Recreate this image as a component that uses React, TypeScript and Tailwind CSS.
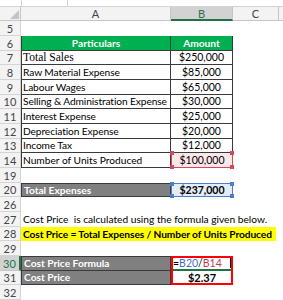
import React from 'react';

const ROW_H = [15, 15, 14, 15, 15, 14, 15, 15, 14, 15, 15, 14, 15, 15, 14, 15, 15, 14, 15];

const dataRows = [
  { n: 7, a: 'Total Sales', b: '$250,000', serif: true },
  { n: 8, a: 'Raw Material Expense', b: '$85,000' },
  { n: 9, a: 'Labour Wages', b: '$65,000' },
  { n: 10, a: 'Selling & Administration Expense', b: '$30,000' },
  { n: 11, a: 'Interest Expense', b: '$25,000' },
  { n: 12, a: 'Depreciation Expense', b: '$20,000' },
  { n: 13, a: 'Income Tax', b: '$12,000' },
];

function RowHead({ n, h, active }: { n: number; h: number; active?: boolean }) {
  return (
    <div
      style={{ height: h }}
      className={`flex w-[21px] shrink-0 items-center justify-center border-b border-r text-[11px] ${
        active ? 'border-r-2 border-b-[#c6c6c6] border-r-[#217346] bg-[#d2d2d2] text-[#217346]' : 'border-[#d4d4d4] bg-[#f3f3f3] text-[#444]'
      }`}
    >
      {n}
    </div>
  );
}

function Handles({ color }: { color: string }) {
  const c = `absolute h-[4px] w-[4px] ${color}`;
  return (
    <>
      <span className={`${c} -left-[2px] -top-[2px]`} />
      <span className={`${c} -right-[2px] -top-[2px]`} />
      <span className={`${c} -left-[2px] -bottom-[2px]`} />
      <span className={`${c} -right-[2px] -bottom-[2px]`} />
    </>
  );
}

export default function App() {
  let i = 0;
  const h = () => ROW_H[i++];

  return (
    <div className="h-[300px] w-[283px] overflow-hidden bg-white font-['Lato',sans-serif] text-[10.2px] leading-none text-black">
      {/* formula bar remnant */}
      <div className="flex h-[7px] border-b border-[#d4d4d4]">
        <div className="w-[22px] border-r border-[#d4d4d4]" />
        <div className="w-[46px] border-r border-[#d4d4d4]" />
        <div className="flex-1" />
      </div>

      {/* column headers */}
      <div className="flex h-[14px] text-[11px] text-[#444]">
        <div className="relative w-[21px] shrink-0 border-b border-r border-[#c6c6c6] bg-[#f3f3f3]">
          <svg className="absolute bottom-[1px] right-[1px]" width="9" height="9" viewBox="0 0 9 9">
            <path d="M9 0 L9 9 L0 9 Z" fill="#c4c4c4" />
          </svg>
        </div>
        <div className="flex w-[150px] items-center justify-center border-b border-r border-[#c6c6c6] bg-[#f3f3f3]">A</div>
        <div className="flex w-[62px] items-center justify-center border-b-2 border-r border-b-[#217346] border-r-[#c6c6c6] bg-[#d2d2d2] text-[#217346]">B</div>
        <div className="flex w-[46px] items-center justify-center border-b border-r border-[#c6c6c6] bg-[#f3f3f3]">C</div>
        <div className="flex-1 border-b border-[#c6c6c6] bg-[#f3f3f3]" />
      </div>

      {/* row 5 */}
      {(() => {
        const hh = h();
        return (
          <div className="flex" style={{ height: hh }}>
            <RowHead n={5} h={hh} />
          </div>
        );
      })()}

      {/* row 6 header */}
      {(() => {
        const hh = h();
        return (
          <div className="flex" style={{ height: hh }}>
            <RowHead n={6} h={hh} />
            <div className="flex w-[150px] items-center justify-center border-x border-b border-[#3a3a3a] bg-[#00b050] font-bold text-white">
              Particulars
            </div>
            <div className="flex w-[62px] items-center justify-center border-b border-r border-[#3a3a3a] bg-[#00b050] font-bold text-white">
              Amount
            </div>
          </div>
        );
      })()}

      {dataRows.map((r) => {
        const hh = h();
        return (
          <div key={r.n} className="flex" style={{ height: hh }}>
            <RowHead n={r.n} h={hh} />
            <div
              className={`flex w-[150px] items-center whitespace-nowrap border-x border-b border-[#3a3a3a] pl-[1px] ${
                r.serif ? "font-['Liberation_Serif',serif] text-[11.5px]" : 'tracking-[-0.1px]'
              }`}
            >
              {r.a}
            </div>
            <div className="flex w-[62px] items-center justify-center text-[10.5px] border-b border-r border-[#3a3a3a]">{r.b}</div>
          </div>
        );
      })}

      {/* row 14 */}
      {(() => {
        const hh = h();
        return (
          <div className="flex" style={{ height: hh }}>
            <RowHead n={14} h={hh} />
            <div className="flex w-[150px] items-center whitespace-nowrap border-x border-b border-[#3a3a3a] pl-[1px]">
              Number of Units Produced
            </div>
            <div className="relative flex w-[62px] items-center justify-center border border-t-0 border-[#d2495c] bg-[#fbe6e9] text-[10.5px]">
              $100,000
              <Handles color="bg-[#d2495c]" />
            </div>
          </div>
        );
      })()}

      {/* row 19 */}
      {(() => {
        const hh = h();
        return (
          <div className="flex" style={{ height: hh }}>
            <RowHead n={19} h={hh} />
          </div>
        );
      })()}

      {/* row 20 */}
      {(() => {
        const hh = h();
        return (
          <div className="flex" style={{ height: hh }}>
            <RowHead n={20} h={hh} />
            <div className="flex w-[150px] items-center border border-[#3a3a3a] bg-[#808080] pl-[2px] font-bold text-white">
              Total Expenses
            </div>
            <div className="relative flex w-[62px] items-center justify-center border border-[#4a7fcf] bg-[#e3ecf8] text-[10.5px] font-bold">
              $237,000
              <Handles color="bg-[#4a7fcf]" />
            </div>
          </div>
        );
      })()}

      {/* row 26 */}
      {(() => {
        const hh = h();
        return (
          <div className="flex" style={{ height: hh }}>
            <RowHead n={26} h={hh} />
          </div>
        );
      })()}

      {/* row 27 */}
      {(() => {
        const hh = h();
        return (
          <div className="flex" style={{ height: hh }}>
            <RowHead n={27} h={hh} />
            <div className="flex items-center whitespace-nowrap pl-[2px]">
              Cost Price&nbsp; is calculated using the formula given below.
            </div>
          </div>
        );
      })()}

      {/* row 28 */}
      {(() => {
        const hh = h();
        return (
          <div className="flex" style={{ height: hh }}>
            <RowHead n={28} h={hh} />
            <div className="flex w-[255px] items-center whitespace-nowrap bg-[#ffff00] pl-[2px] font-bold tracking-[-0.1px]">
              Cost Price = Total Expenses / Number of Units Produced
            </div>
          </div>
        );
      })()}

      {/* row 29 */}
      {(() => {
        const hh = h();
        return (
          <div className="flex" style={{ height: hh }}>
            <RowHead n={29} h={hh} />
          </div>
        );
      })()}

      {/* rows 30-31 */}
      {(() => {
        const h30 = h();
        const h31 = h();
        return (
          <div className="flex">
            <div className="flex flex-col">
              <RowHead n={30} h={h30} active />
              <RowHead n={31} h={h31} />
            </div>
            <div className="flex w-[150px] flex-col">
              <div style={{ height: h30 }} className="flex items-center border border-[#3a3a3a] bg-[#808080] pl-[2px] font-bold text-white">
                Cost Price Formula
              </div>
              <div style={{ height: h31 }} className="flex items-center border-x border-b border-[#3a3a3a] bg-[#808080] pl-[2px] font-bold text-white">
                Cost Price
              </div>
            </div>
            <div className="relative flex w-[62px] flex-col">
              <div style={{ height: h30 }} className="flex items-end border-b-2 border-[#217346] pb-[1px] pl-[2px] text-[10.5px]">
                <span>=</span>
                <span className="text-[#3f6fd1]">B20</span>
                <span>/</span>
                <span className="text-[#c43c4c]">B14</span>
                <span className="ml-[8px] h-[10px] w-px bg-black" />
              </div>
              <div style={{ height: h31 - 2 }} className="flex items-center justify-center text-[11px] font-bold">
                $2.37
              </div>
              <div className="pointer-events-none absolute inset-0 border-2 border-[#ff0000]" />
            </div>
          </div>
        );
      })()}

      {/* row 32 */}
      {(() => {
        const hh = h();
        return (
          <div className="flex" style={{ height: hh }}>
            <RowHead n={32} h={hh} />
          </div>
        );
      })()}
    </div>
  );
}
